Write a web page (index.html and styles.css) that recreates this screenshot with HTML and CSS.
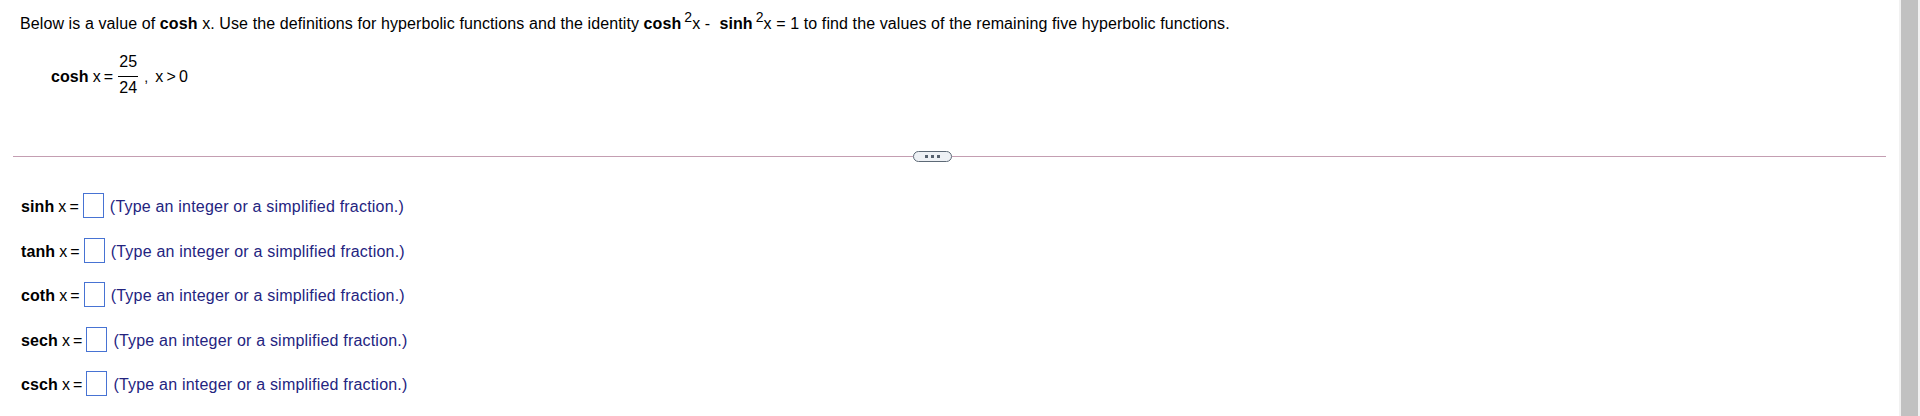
FILE: index.html
```html
<!DOCTYPE html>
<html lang="en">
<head>
<meta charset="utf-8">
<title>Hyperbolic functions</title>
<link rel="stylesheet" href="styles.css">
</head>
<body>
<div class="page">
  <main class="main">
    <p class="intro">Below is a value of <b>cosh</b> x. Use the definitions for hyperbolic functions and the identity <b>cosh</b><sup class="sq">2</sup>x - &nbsp;<b>sinh</b><sup class="sq">2</sup>x = 1 to find the values of the remaining five hyperbolic functions.</p>

    <div class="given"><b class="fn">cosh</b><span class="var">x</span><span class="eq">=</span><span class="frac"><span class="num">25</span><span class="den">24</span></span><span class="comma">,</span><span class="cond">x &gt; 0</span></div>

    <div class="divider">
      <span class="rule rule-left"></span>
      <span class="pill"><i class="dot"></i><i class="dot"></i><i class="dot"></i></span>
      <span class="rule rule-right"></span>
    </div>

    <div class="answers">
      <div class="row"><b class="fn">sinh</b><span class="var">x</span><span class="eq">=</span><span class="box"></span><span class="hint">(Type an integer or a simplified fraction.)</span></div>
      <div class="row"><b class="fn">tanh</b><span class="var">x</span><span class="eq">=</span><span class="box"></span><span class="hint">(Type an integer or a simplified fraction.)</span></div>
      <div class="row"><b class="fn">coth</b><span class="var">x</span><span class="eq">=</span><span class="box"></span><span class="hint">(Type an integer or a simplified fraction.)</span></div>
      <div class="row"><b class="fn">sech</b><span class="var">x</span><span class="eq">=</span><span class="box"></span><span class="hint">(Type an integer or a simplified fraction.)</span></div>
      <div class="row"><b class="fn">csch</b><span class="var">x</span><span class="eq">=</span><span class="box"></span><span class="hint">(Type an integer or a simplified fraction.)</span></div>
    </div>
  </main>
  <div class="scrollbar"><div class="thumb"></div></div>
</div>
</body>
</html>
```

FILE: styles.css
```css
html, body {
  margin: 0;
  padding: 0;
  background: #ffffff;
}

body {
  font-family: "Liberation Sans", Arial, sans-serif;
  font-size: 16px;
  color: #000000;
  letter-spacing: 0.1px;
}

.page {
  display: flex;
  height: 416px;
  overflow: hidden;
}

.main {
  flex: 1;
  min-width: 0;
}

.intro {
  margin: 0;
  padding: 14px 0 0 20px;
  line-height: 20px;
  white-space: nowrap;
}

.intro b {
  font-weight: bold;
}

.sq {
  font-size: 14px;
  line-height: 0;
  vertical-align: 7px;
  margin-left: 3px;
}

.given {
  margin-top: 19px;
  padding-left: 51px;
  line-height: 20px;
  white-space: nowrap;
}

.fn {
  font-weight: bold;
  margin-right: 4px;
}

.var {
  margin-right: 3px;
}

.eq {
  margin-right: 4px;
}

.given .eq {
  margin-right: 5px;
}

.frac {
  display: inline-flex;
  flex-direction: column;
  align-items: stretch;
  vertical-align: 15px;
  text-align: center;
}

.num {
  line-height: 18px;
  padding: 0 1px 5px;
  border-bottom: 1px solid #000000;
}

.den {
  line-height: 18px;
  padding: 2px 1px 0;
}

.comma {
  font-size: 14px;
  margin-left: 6px;
}

.cond {
  margin-left: 7px;
  word-spacing: -1.5px;
}

.divider {
  display: flex;
  align-items: center;
  height: 11px;
  margin-top: 54px;
  padding: 0 13px;
}

.rule {
  height: 1px;
  background: #c49eb2;
}

.rule-left {
  width: 900px;
}

.rule-right {
  flex: 1;
}

.pill {
  display: flex;
  align-items: center;
  justify-content: center;
  gap: 3px;
  box-sizing: border-box;
  width: 39px;
  height: 11px;
  border: 1px solid #5d6976;
  border-radius: 6px;
  background: #eef1f5;
}

.dot {
  display: block;
  width: 3px;
  height: 3px;
  background: #56616e;
}

.answers {
  display: flex;
  flex-direction: column;
  gap: 19.5px;
  margin-top: 31px;
}

.row {
  padding-left: 21px;
  line-height: 20px;
  white-space: nowrap;
}

.box {
  display: inline-block;
  width: 19px;
  height: 23px;
  border: 1px solid #4773d3;
  background: #ffffff;
  vertical-align: -6px;
}

.hint {
  margin-left: 6px;
  color: #24247f;
  letter-spacing: 0.2px;
}

.scrollbar {
  width: 21px;
  flex: none;
  background: #f1f1f1;
  padding: 0 2px;
  box-sizing: border-box;
  display: flex;
}

.thumb {
  flex: 1;
  background: #c1c1c1;
}
```
